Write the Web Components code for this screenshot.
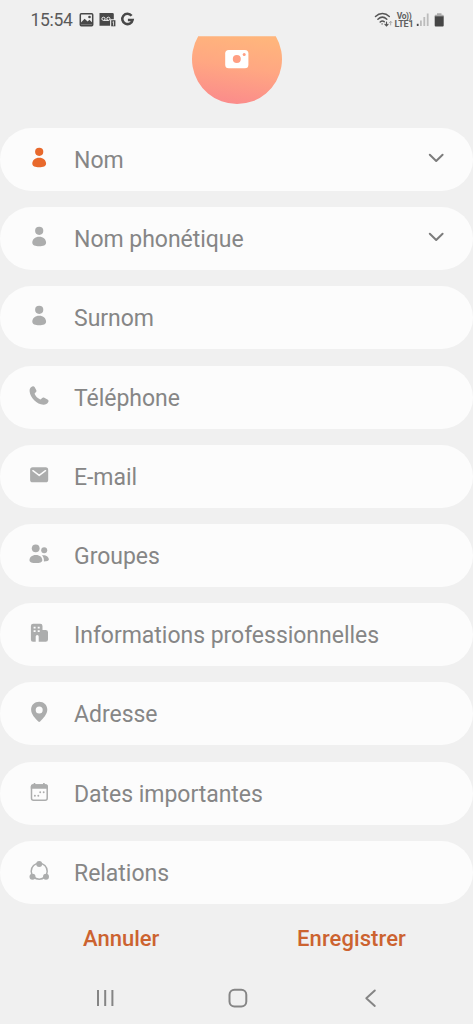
<!DOCTYPE html>
<html lang="fr">
<head>
<meta charset="utf-8">
<title>Nouveau contact</title>
<style>
html,body{margin:0;height:100%;background:#f0f0f0;overflow:hidden}
body{font-family:Roboto,"Liberation Sans",sans-serif}
</style>
</head>
<body>
<contact-editor></contact-editor>
<script>
const define = (name, html) => {
  const t = document.createElement('template');
  t.innerHTML = html;
  customElements.define(name, class extends HTMLElement {
    constructor() {
      super();
      this.attachShadow({mode: 'open'}).append(t.content.cloneNode(true));
    }
  });
};

const ICONS = {
  person: '<circle cx="12.2" cy="5.8" r="4.1"/><path d="M12.2 11.7c4.2 0 6.9 2.6 6.9 6 0 2.4-2.9 3.6-6.9 3.6s-6.9-1.2-6.9-3.6c0-3.4 2.7-6 6.9-6z"/>',
  phone: '<path d="M4.300 3.100 5.300 2.500c.9-.5 1.800-.3 2.300.6l1.600 3c.5.9.3 1.600-.4 2.200l-.8.7c-.4.4-.4.800-.2 1.300 1 2.300 2.800 4 5.100 5 .5.200 1 .2 1.300-.2l.9-1c.6-.7 1.400-.8 2.200-.4l3.200 1.800c1 .6 1.300 1.500.8 2.400-1 1.900-2.800 2.900-4.900 2.800C9.900 20.500 3.100 13.900 2.600 7.300c-.1-1.900.4-3.300 1.700-4.200z"/>',
  mail: '<rect x="3.100" y="4.300" width="18.100" height="15" rx="2.600"/><path d="m5.900 7.700 6.300 4.700 6.300-4.700" fill="none" stroke="#fcfcfc" stroke-width="1.500" stroke-linecap="round" stroke-linejoin="round"/>',
  group: '<circle cx="8.700" cy="6.300" r="3.900"/><circle cx="17.200" cy="8.300" r="3"/><path d="M8.900 13c4.100 0 6.400 2.400 6.400 5.300 0 2-2.600 2.800-6.400 2.800s-6.400-.8-6.400-2.800c0-2.900 2.300-5.300 6.400-5.300zM14.900 13.200c4.300-.5 7 1.700 7 4.300 0 1.200-1.900 1.900-5 1.900.2-2.400-.4-4.500-2-6.200z"/>',
  building: '<path fill-rule="evenodd" d="M6.200 2.800h7a2.300 2.300 0 0 1 2.300 2.300v3.800h3.200A2.300 2.300 0 0 1 21 11.200v7.300a2.300 2.300 0 0 1-2.300 2.300h-7V15.500a1.500 1.500 0 0 0-3 0v5.300H6a2.100 2.100 0 0 1-2.100-2.100V5.100a2.300 2.300 0 0 1 2.300-2.300zM6.600 5.700v1.700h2V5.700zm4.100 0v1.700h2V5.700zM6.600 9.300V11h2V9.300zm4.100 0V11h2V9.300z"/>',
  pin: '<path fill-rule="evenodd" d="M12.200 1.800c4.600 0 8.100 3.300 8.100 7.800 0 4.700-4.100 9-7.200 12-.6.600-1.200.6-1.800 0-3.100-3-7.200-7.300-7.200-12 0-4.500 3.500-7.800 8.100-7.800zm0 4.600a3.500 3.500 0 1 0 0 7 3.500 3.500 0 0 0 0-7z"/>',
  calendar: '<rect x="4.500" y="5" width="15.700" height="15.300" rx="2" fill="none" stroke="currentColor" stroke-width="1.500"/><path d="M3.800 8.800V6.200a2 2 0 0 1 2-2h.9V3h1.600v1.200h7.800V3h1.600v1.200h1.200a2 2 0 0 1 2 2v2.600z"/><g><circle cx="13.200" cy="12.200" r=".95"/><circle cx="16.700" cy="12.200" r=".95"/><circle cx="7.900" cy="15.800" r=".95"/><circle cx="11.300" cy="15.800" r=".95"/></g>',
  relation: '<circle cx="12.200" cy="12.200" r="8" fill="none" stroke="currentColor" stroke-width="1.500"/><circle cx="12.200" cy="5" r="3"/><circle cx="5.500" cy="17.800" r="3"/><circle cx="19" cy="17.800" r="3"/>'
};

customElements.define('field-icon', class extends HTMLElement {
  connectedCallback() {
    if (this.shadowRoot) return;
    this.attachShadow({mode: 'open'}).innerHTML =
      '<style>:host{display:block;width:24px;height:24px;color:var(--icon,#acadad)}svg{display:block}</style>' +
      '<svg width="24" height="24" viewBox="0 0 24 24" fill="currentColor">' + ICONS[this.getAttribute('name')] + '</svg>';
  }
});

define('contact-field', `<style>
:host{display:flex;align-items:flex-start;box-sizing:border-box;height:63px;border-radius:31.500px;background:#fcfcfc;padding:18px 25px 0 27px;color:#868686}
.label{flex:1;margin:1px 0 0 23px;font-size:23px;line-height:28px;letter-spacing:-.03px;white-space:nowrap}
.chev{display:none}
:host([expandable]) .chev{display:block}
svg{display:block}
</style>
<slot name="icon"></slot><span class="label"><slot></slot></span>
<svg class="chev" width="24" height="24" viewBox="0 0 24 24"><path d="m5.800 8.800 6.400 6.200 6.400-6.200" fill="none" stroke="#7c7c7c" stroke-width="2" stroke-linecap="round" stroke-linejoin="round"/></svg>`);

define('status-bar', `<style>
:host{display:flex;align-items:center;box-sizing:border-box;height:36px;padding:3px 28px 0 30px;color:#4a4a4a}
.time{font-size:17.500px;line-height:22px;letter-spacing:-.3px;width:48.500px;padding-left:.5px;white-space:nowrap;color:#5a5a5a}
svg{display:block}
.sp{flex:1}
.lte{display:flex;flex-direction:column;width:20px;align-items:center;font-size:9px;line-height:8px;font-weight:700;letter-spacing:-.2px;color:#606060;margin:0 2px 0 1px;white-space:nowrap}
.vo{font-size:8.500px;line-height:8px;letter-spacing:-.4px}
</style>
<span class="time">15:54</span>
<svg width="58" height="16" viewBox="79 11 58 16">
 <rect x="80.300" y="12.800" width="12.400" height="12" rx="1" fill="none" stroke="#484848" stroke-width="1.500"/>
 <path d="M81 23.800v-2.300l3.600-3.800 3 2.700 1.800-1.600 3 3v2z" fill="#484848"/><circle cx="89.500" cy="16" r="1.300" fill="#484848"/>
 <path d="M99.500 12h13a1.300 1.300 0 0 1 1.300 1.300v5h-3.700v6.500H99.500V12z" fill="#484848"/>
 <g fill="none" stroke="#f0f0f0" stroke-width="1"><circle cx="103.500" cy="17.800" r="1.600"/><circle cx="108.400" cy="17.800" r="1.600"/><path d="M103.500 19.400h5"/></g>
 <path d="M111.200 19.200h4.200v6.100h-4.200z" fill="#484848"/><path d="m112.500 21.200 1-.6v4" fill="none" stroke="#f0f0f0" stroke-width=".8"/>
 <path d="M131.600 14.700a5.200 5.200 0 1 0 1 4.200h-4.700" fill="none" stroke="#484848" stroke-width="2.500"/>
</svg>
<span class="sp"></span>
<svg width="19" height="16" viewBox="374 11 19 16" fill="none" stroke="#555" stroke-width="1.500" stroke-linecap="round"><path d="M375.500 15.500c4-3.900 9.800-3.900 13.800 0M377.900 18.300c2.700-2.600 6.200-2.600 8.900 0M380.200 21c1.300-1.200 2.700-1.300 4-.3"/><circle cx="382.100" cy="22.900" r=".7" fill="#555" stroke="none"/><path d="M386.500 21.200v3.500m-1.500-1.400 1.500 1.600 1.500-1.600" stroke-width="1.200"/><path d="M390.700 24v-3.600m-1.200 1.200 1.200-1.300 1.200 1.300" stroke="#aaa" stroke-width="1"/></svg>
<span class="lte"><span class="vo">Vo))</span><span>LTE1</span></span>
<svg width="29" height="16" viewBox="415 11 29 16"><path d="M415.800 22.800h1.800V25h-1.800z" fill="#4a4a4a"/><path d="M419 19.500h1.800V25H419zM422.400 16h1.800v9h-1.800zM425.800 12.500h1.800V25h-1.800z" fill="#bcbcbc"/><path d="M436 12.200h4.500v1.600h1.400a.8.800 0 0 1 .8.800v1h-9v-1a.8.800 0 0 1 .8-.8h1.500z" fill="#aaa"/><path d="M433.700 15.200h9v9.200a1 1 0 0 1-1 1h-7a1 1 0 0 1-1-1z" fill="#464646"/></svg>`);

define('photo-picker', `<style>
:host{display:flex;justify-content:center;height:92px}
svg{display:block}
</style>
<svg width="92" height="92" viewBox="191 36 92 92">
<defs><linearGradient id="g" x1=".6" y1="0" x2=".4" y2="1"><stop offset="0" stop-color="#ffb57c"/><stop offset=".45" stop-color="#ffa782"/><stop offset="1" stop-color="#fb8b8b"/></linearGradient></defs>
<path d="M198.200 36.300h77.600A45 45 0 1 1 198.200 36.300z" fill="url(#g)"/>
<rect x="225.200" y="50" width="23.200" height="18.200" rx="3.500" fill="#fff"/>
<circle cx="236.800" cy="59" r="4" fill="#ff9f83"/><circle cx="244.200" cy="54.500" r="1.500" fill="#ff9f83"/>
</svg>`);

define('action-bar', `<style>
:host{display:grid;grid-template-columns:1fr 1fr;height:68px;padding:0 5px;color:#cc6330;font-size:22px;font-weight:500;line-height:26px}
span{text-align:center;padding-top:22px;white-space:nowrap}
.c{padding-left:1px}
.s{padding-right:1.500px;letter-spacing:.08px}
</style>
<span class="c"><slot name="cancel"></slot></span><span class="s"><slot name="save"></slot></span>`);

define('nav-bar', `<style>
:host{display:flex;justify-content:space-between;padding:0 90px 0 93px;height:52px;align-items:center}
svg{display:block;fill:none;stroke:#858585;stroke-width:2;stroke-linecap:round;stroke-linejoin:round}
</style>
<svg width="24" height="24"><path d="M5 4v16M12.200 4v16M19.400 4v16" style="stroke-linecap:butt"/></svg>
<svg width="24" height="24"><rect x="3.500" y="3.800" width="16.800" height="16.800" rx="5"/></svg>
<svg width="24" height="24"><path d="m15.800 4.500-8.500 7.700 8.500 7.700"/></svg>`);

define('contact-editor', `<style>
:host{display:flex;flex-direction:column;width:473px;height:1024px;background:#f0f0f0}
.list{display:flex;flex-direction:column;gap:16.200px}
</style>
<status-bar></status-bar>
<photo-picker></photo-picker>
<div class="list">
<contact-field expandable><field-icon slot="icon" name="person" style="--icon:#e8692c"></field-icon>Nom</contact-field>
<contact-field expandable><field-icon slot="icon" name="person"></field-icon>Nom phonétique</contact-field>
<contact-field><field-icon slot="icon" name="person"></field-icon>Surnom</contact-field>
<contact-field><field-icon slot="icon" name="phone"></field-icon>Téléphone</contact-field>
<contact-field><field-icon slot="icon" name="mail"></field-icon>E-mail</contact-field>
<contact-field><field-icon slot="icon" name="group"></field-icon>Groupes</contact-field>
<contact-field><field-icon slot="icon" name="building"></field-icon>Informations professionnelles</contact-field>
<contact-field><field-icon slot="icon" name="pin"></field-icon>Adresse</contact-field>
<contact-field><field-icon slot="icon" name="calendar"></field-icon>Dates importantes</contact-field>
<contact-field><field-icon slot="icon" name="relation"></field-icon>Relations</contact-field>
</div>
<action-bar><span slot="cancel">Annuler</span><span slot="save">Enregistrer</span></action-bar>
<nav-bar></nav-bar>`);
</script>
</body>
</html>
